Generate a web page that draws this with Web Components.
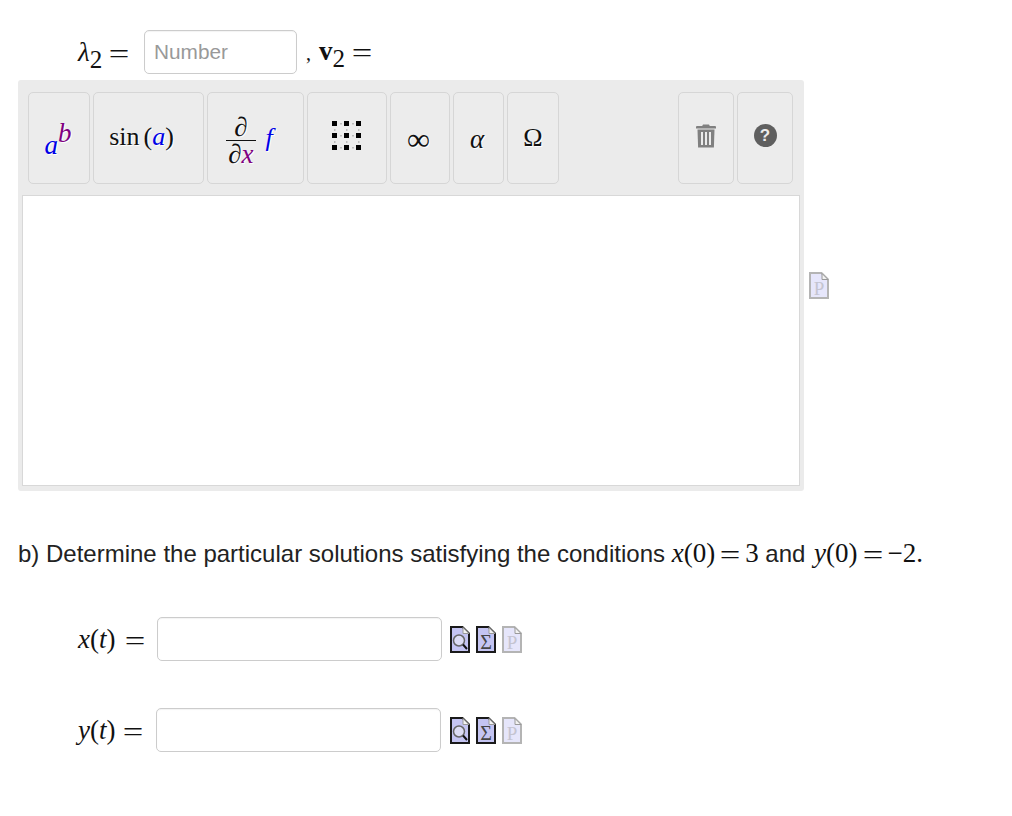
<!DOCTYPE html>
<html><head><meta charset="utf-8"><title>Eigenvectors</title>
<style>
html,body{margin:0;padding:0;background:#fff}
body{font-family:"Liberation Sans",Arial,sans-serif;color:#222}
i.b{color:#0000e6}i.p{color:#800080}
sub{font-size:.93em;vertical-align:-.28em;line-height:0;font-style:normal;font-weight:normal}
.e{display:inline-block;width:20px;text-align:center;transform:translateY(2px) scaleX(1.35);transform-origin:50% 50%;font-weight:normal;font-style:normal}
</style></head><body>
<template id="t-page"><style>
:host{display:block;width:1012px;height:816px;box-sizing:border-box;padding-top:30px;overflow:hidden;font-size:20.8px;line-height:28px;color:#222}
</style><slot></slot></template>

<template id="t-row"><style>
:host{display:flex;align-items:center;height:44px;margin-left:78px;white-space:nowrap}
</style><slot></slot></template>

<template id="t-m"><style>
:host{display:inline-block;font-family:"Liberation Serif","Times New Roman",serif;font-size:27px;line-height:28px;color:#111;white-space:nowrap}
</style><slot></slot></template>

<template id="t-input"><style>
:host{display:block;box-sizing:border-box;height:44px;border:1px solid #ccc;border-radius:5px;background:#fff;padding:0 9px;font-size:20.8px;line-height:42px;color:#999;box-shadow:inset 0 1px 1px rgba(0,0,0,.05)}
</style><slot></slot></template>

<template id="t-editor"><style>
:host{display:flex;align-items:center;margin:6px 0 0 18px;height:411px}
.box{width:786px;height:411px;box-sizing:border-box;background:#ebebeb;border-radius:3px;padding:12px 4px 5px;display:flex;flex-direction:column}
.bar{display:flex;gap:3px;height:92px;padding:0 7px 0 6px}
.spacer{flex:1}
.area{margin-top:11px;flex:1;background:#fff;border:1px solid #d8d8d8}
.after{margin:6px 0 0 5px}
</style><div class="box"><div class="bar"><slot name="tools"></slot><div class="spacer"></div><slot name="end"></slot></div><div class="area"></div></div><div class="after"><slot name="after"></slot></div></template>

<template id="t-btn"><style>
:host{display:flex;align-items:center;justify-content:center;box-sizing:border-box;height:92px;border:1px solid #d6d6d6;border-radius:5px;background:#ececec;font-family:"Liberation Serif",serif;font-size:27px;color:#111;text-shadow:1px 1px 0 #fff;white-space:nowrap}
</style><slot></slot></template>

<template id="t-doc"><style>
:host{display:inline-block;width:20px;height:27px;line-height:0}
svg{display:block}
text{font-family:"Liberation Serif",serif}
</style><svg width="20" height="27" viewBox="0 0 20 27"><path id="sh" d="M1 1H12.500L19 7.500V26H1Z" stroke-width="2" stroke-linejoin="miter"/><path id="cr" d="M13 1.500V7.500H19Z" fill="#f2f2f2" stroke="#9a9a9a" stroke-width="1"/><g id="g"></g></svg></template>

<template id="t-para"><style>
:host{display:block;margin:48px 0 0 18px;height:28px;line-height:28px;white-space:nowrap;font-size:24px}
</style><slot></slot></template>

<x-page>
  <x-row>
    <x-m style="width:66px"><i>λ</i><sub>2</sub><span class="e" style="margin-left:7px">=</span></x-m>
    <x-input style="width:153px">Number</x-input>
    <x-m style="margin-left:9px"><span style="font-size:20px;margin-right:8px">,</span><b>v</b><sub>2</sub><span class="e" style="margin-left:7px">=</span></x-m>
  </x-row>
  <x-editor>
    <x-btn slot="tools" style="width:62px"><span style="margin:14px 2px 0 0"><i class="b">a</i><i class="p" style="position:relative;top:-12px">b</i></span></x-btn>
    <x-btn slot="tools" style="width:111px"><span style="margin:-3px 14px 0 0;font-size:26px">sin<span style="margin-left:4px">(</span><i class="b">a</i>)</span></x-btn>
    <x-btn slot="tools" style="width:97px"><span style="display:inline-flex;flex-direction:column;align-items:center;line-height:26px;font-size:27px;margin:5px 0 0 -12px"><span>∂</span><span style="border-top:1px solid #111;padding:0 2px">∂<i class="p">x</i></span></span><i class="b" style="margin-left:10px;font-size:26px">f</i></x-btn>
    <x-btn slot="tools" style="width:80px"><svg width="30" height="30" viewBox="0 0 30 30" style="margin-top:-4px"><g fill="#bbb"><rect x="8" y="2" width="2" height="1.500"/><rect x="20" y="2" width="2" height="1.500"/><rect x="8" y="14" width="2" height="1.500"/><rect x="20" y="14" width="2" height="1.500"/><rect x="8" y="26" width="2" height="1.500"/><rect x="20" y="26" width="2" height="1.500"/><rect x="2" y="8" width="1.500" height="2"/><rect x="14" y="8" width="1.500" height="2"/><rect x="26" y="8" width="1.500" height="2"/><rect x="2" y="20" width="1.500" height="2"/><rect x="14" y="20" width="1.500" height="2"/><rect x="26" y="20" width="1.500" height="2"/></g><g fill="#000"><rect x="0" y="0" width="5" height="5"/><rect x="12" y="0" width="5" height="5"/><rect x="24" y="0" width="5" height="5"/><rect x="0" y="12" width="5" height="5"/><rect x="12" y="12" width="5" height="5"/><rect x="24" y="12" width="5" height="5"/><rect x="0" y="24" width="5" height="5"/><rect x="12" y="24" width="5" height="5"/><rect x="24" y="24" width="5" height="5"/></g></svg></x-btn>
    <x-btn slot="tools" style="width:60px"><span style="margin:2px 3px 0 0;font-size:32px;line-height:32px">∞</span></x-btn>
    <x-btn slot="tools" style="width:51px"><span style="margin:2px 3px 0 0"><i>α</i></span></x-btn>
    <x-btn slot="tools" style="width:52px"><span style="font-size:26px">Ω</span></x-btn>
    <x-btn slot="end" style="width:56px"><svg width="24" height="24" viewBox="0 0 22 24" style="margin-top:-4px"><path d="M8 .5h6l.8 1.500H20a1 1 0 0 1 1 1V4.500H1V3a1 1 0 0 1 1-1h5.200Z" fill="#808080"/><path d="M2.500 5.500h17l-.6 18H3.100Z" fill="#808080"/><path d="M7 8v13M11 8v13M15 8v13" stroke="#ececec" stroke-width="2"/></svg></x-btn>
    <x-btn slot="end" style="width:56px"><span style="display:flex;width:23px;height:23px;margin-top:-5px;border-radius:50%;background:#5f5f5f;color:#ececec;align-items:center;justify-content:center;font:bold 17px/23px 'Liberation Sans',sans-serif;text-shadow:none">?</span></x-btn>
    <x-doc slot="after" kind="P" pale></x-doc>
  </x-editor>
  <x-para>b) Determine the particular solutions satisfying the conditions <x-m><i>x</i>(0)<span class="e" style="margin:0 5px">=</span>3</x-m> and <x-m style="margin-left:2px"><i>y</i>(0)<span class="e" style="margin:0 5px">=</span>−2.</x-m></x-para>
  <x-row style="margin-top:50px">
    <x-m style="width:79px"><i>x</i>(<i>t</i>)<span class="e" style="margin-left:9px">=</span></x-m>
    <x-input style="width:285px"></x-input>
    <span style="display:flex;gap:6px;margin-left:8px"><x-doc kind="Q"></x-doc><x-doc kind="S"></x-doc><x-doc kind="P" pale></x-doc></span>
  </x-row>
  <x-row style="margin-top:47px">
    <x-m style="width:78px"><i>y</i>(<i>t</i>)<span class="e" style="margin-left:7px">=</span></x-m>
    <x-input style="width:285px"></x-input>
    <span style="display:flex;gap:6px;margin-left:9px"><x-doc kind="Q"></x-doc><x-doc kind="S"></x-doc><x-doc kind="P" pale></x-doc></span>
  </x-row>
</x-page>
<script>
function base(id){return class extends HTMLElement{constructor(){super();this.attachShadow({mode:'open'}).appendChild(document.getElementById(id).content.cloneNode(true));}}}
customElements.define('x-page',base('t-page'));
customElements.define('x-row',base('t-row'));
customElements.define('x-m',base('t-m'));
customElements.define('x-input',base('t-input'));
customElements.define('x-editor',base('t-editor'));
customElements.define('x-btn',base('t-btn'));
customElements.define('x-para',base('t-para'));
customElements.define('x-doc',class extends base('t-doc'){
 connectedCallback(){
  const r=this.shadowRoot,pale=this.hasAttribute('pale'),k=this.getAttribute('kind');
  const sh=r.getElementById('sh'),g=r.getElementById('g');
  sh.setAttribute('fill',pale?'#e6e6fb':'#c4c4f2');
  sh.setAttribute('stroke',pale?'#b4b4b4':'#1a1a1a');
  const ink=pale?'#c4c4d0':'#444';
  if(k==='Q')g.innerHTML=`<circle cx="9" cy="14.500" r="5.500" fill="#dcdcf4" stroke="#666" stroke-width="1.500"/><path d="M13 18.500L17 23" stroke="#111" stroke-width="2"/>`;
  else{const t=document.createElementNS('http://www.w3.org/2000/svg','text');t.textContent=k==='S'?'Σ':'P';t.setAttribute('x','10');t.setAttribute('y','23');t.setAttribute('text-anchor','middle');t.setAttribute('font-size',k==='S'?'20':'19');t.setAttribute('fill',ink);g.appendChild(t);}
 }
});
</script>
</body></html>
